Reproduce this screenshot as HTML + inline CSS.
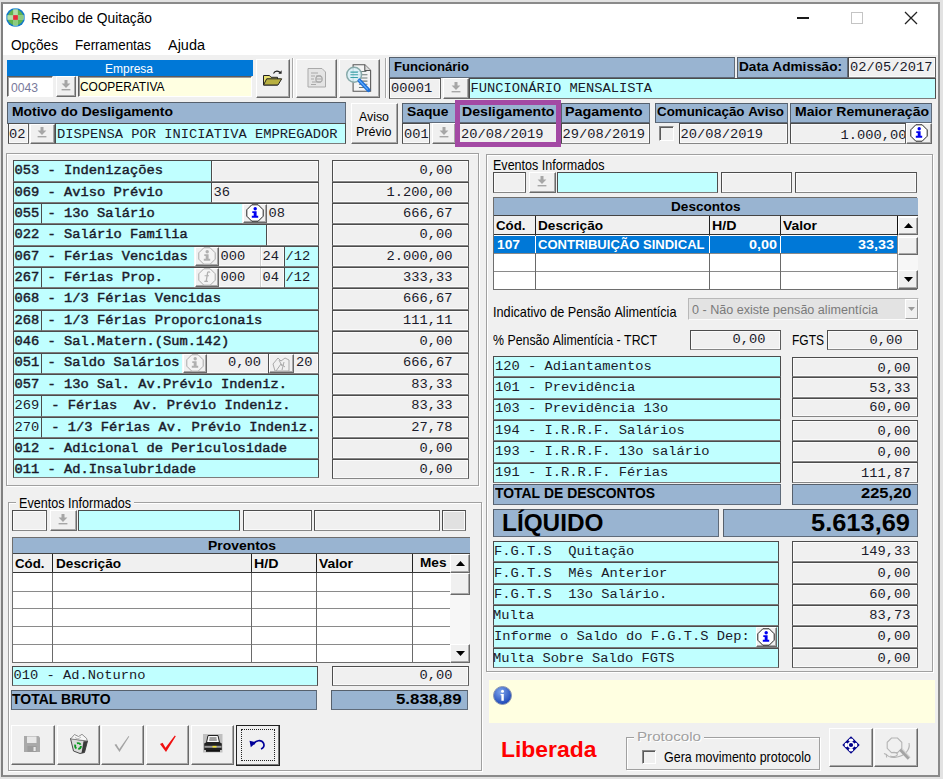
<!DOCTYPE html><html><head><meta charset="utf-8"><title>Recibo de Quitação</title><style>
html,body{margin:0;padding:0}
body{width:943px;height:779px;overflow:hidden;position:relative;background:#e2e2e2;font-family:"Liberation Sans",sans-serif;color:#000}
.a{position:absolute;box-sizing:border-box}
.t{position:absolute;white-space:nowrap;transform-origin:0 50%}
.s{font-family:"Liberation Sans",sans-serif}
.m{font-family:"Liberation Mono",monospace;color:#1a1a2a;transform:scaleY(.92);transform-origin:50% 78%}
.b{font-weight:bold}
.m.b{font-weight:normal;-webkit-text-stroke:.45px #1a1a2a}
.win{background:#f0f0f0;border:2px solid #8a8a8a;border-left-color:#808080 }
.hd{background:#99b4d1;border:1px solid #5f6b7a;border-top-color:#56606c;border-left-color:#56606c}
.cy{background:#c0ffff;border:1px solid #4c4c4c;border-bottom-color:#7c7c7c}
.fld{background:#f0f0f0;border:1px solid #4c4c4c;border-bottom-color:#868686;border-right-color:#5c5c5c;box-shadow:inset 0 0 0 1px #fafafa}
.sunk{background:#f0f0f0;border:1px solid;border-color:#5c5c5c #fff #fff #5c5c5c;box-shadow:inset 1px 1px 0 #9c9c9c}
.btn{background:#f0f0f0;border:1px solid;border-color:#fff #6a6a6a #6a6a6a #fff;box-shadow:inset -1px -1px 0 #a8a8a8}
.chk{background:#f0f0f0;border:1px solid;border-color:#8a8a8a #fff #fff #8a8a8a;box-shadow:inset 1px 1px 0 #5a5a5a}
.vsep{border-left:1px solid #a8a8a8;border-right:1px solid #fff}
.panel{border:1px solid #a0a0a0;box-shadow:inset 1px 1px 0 #fff,1px 1px 0 #fff}
.grp{border:1px solid #a0a0a0;box-shadow:inset 1px 1px 0 #fff,1px 1px 0 #fff}
.gridbox{background:#fff;border:1px solid #6e6e6e}
.colhd{background:#f0f0f0}
</style></head><body>
<div class="a win" style="left:1px;top:2px;width:939px;height:775px;"></div>
<div class="a " style="left:3px;top:4px;width:935px;height:51px;background:#fff"></div>
<svg class="a" style="left:6px;top:8.200px" width="19" height="19" viewBox="0 0 19 19"><defs><clipPath id="ic"><circle cx="9.500" cy="9.500" r="7.900"/></clipPath><clipPath id="oc"><circle cx="9.500" cy="9.500" r="9.500"/></clipPath></defs><circle cx="9.500" cy="9.500" r="9.500" fill="#1279c9"/><g clip-path="url(#oc)"><rect x="7.150" y="0" width="4.700" height="19" fill="#8cc4ea" opacity=".75"/><rect x="0" y="7.150" width="19" height="4.700" fill="#8cc4ea" opacity=".75"/></g><g clip-path="url(#ic)"><rect width="19" height="19" fill="#62b450"/><rect x="7.150" y="0" width="4.700" height="19" fill="#b4deac"/><rect x="0" y="7.150" width="19" height="4.700" fill="#b4deac"/><rect x="11.850" y="7.150" width="8" height="4.700" fill="#8ccb80"/><rect x="7.150" y="11.850" width="4.700" height="8" fill="#8ccb80"/></g><rect x="7.150" y="7.150" width="4.700" height="4.700" fill="#e8283a"/></svg>
<span id="t1" class="t s" style="font-size:15.1px;line-height:18.12px;top:9.14px;transform:scaleX(0.9127);left:31px;">Recibo&nbsp;de&nbsp;Quitação</span>
<span id="t2" class="t s" style="font-size:15.1px;line-height:18.12px;top:36.14px;transform:scaleX(0.9033);left:11px;">Opções</span>
<span id="t3" class="t s" style="font-size:15.1px;line-height:18.12px;top:36.14px;transform:scaleX(0.8882);left:75px;">Ferramentas</span>
<span id="t4" class="t s" style="font-size:15.1px;line-height:18.12px;top:36.14px;transform:scaleX(0.9583);left:168px;">Ajuda</span>
<div class="a " style="left:797px;top:17.3px;width:12px;height:1.5px;background:#1a1a1a"></div>
<div class="a " style="left:851px;top:12px;width:11.5px;height:11.5px;border:1px solid #c4c4c4"></div>
<svg class="a" style="left:904px;top:11px" width="14" height="14" viewBox="0 0 14 14"><path d="M1 1l12 12M13 1L1 13" stroke="#222" stroke-width="1.3" fill="none"/></svg>
<div class="a " style="left:7px;top:60px;width:246px;height:16px;background:#0078d7"></div>
<span id="t5" class="t s" style="font-size:13.7px;line-height:16.44px;top:60.78px;transform:scaleX(0.8762);color:#fff;left:104.5px;">Empresa</span>
<div class="a sunk" style="left:7px;top:76px;width:46px;height:21px;background:#fff"></div>
<span id="t6" class="t s" style="font-size:13.7px;line-height:16.44px;top:80.08px;transform:scaleX(0.8866);color:#7a7a9c;left:11px;">0043</span>
<div class="a btn" style="left:56px;top:76px;width:19.5px;height:21px;"></div>
<svg class="a" style="left:60.75px;top:79.9px" width="10" height="11" viewBox="0 0 10 11"><path d="M3.500 0h3v3.600h2.900L5 8 .6 3.600h2.900z" fill="#a6a6a6"/><rect x=".6" y="9" width="8.800" height="1.400" fill="#a6a6a6"/></svg>
<div class="a sunk" style="left:78px;top:76px;width:173.5px;height:21px;background:#ffffe1"></div>
<span id="t7" class="t s" style="font-size:13.7px;line-height:16.44px;top:79.28px;transform:scaleX(0.8725);left:79.5px;">COOPERATIVA</span>
<div class="a btn" style="left:256px;top:59px;width:33.5px;height:38.5px;"></div>
<div class="a vsep" style="left:291.5px;top:58px;width:2px;height:40px;"></div>
<div class="a btn" style="left:296px;top:59px;width:40.5px;height:38.5px;"></div>
<div class="a btn" style="left:338.5px;top:59px;width:41.5px;height:38.5px;"></div>
<div class="a vsep" style="left:384.5px;top:58px;width:2px;height:40px;"></div>
<svg class="a" style="left:262px;top:68px" width="22" height="20" viewBox="0 0 22 20"><path d="M1.5 7.5h6l1.5 1.8h6.5V17h-14z" fill="#e8e070" stroke="#222" stroke-width="1"/><path d="M1.5 17l3.2-6.2h15L16 17z" fill="#b8b040" stroke="#222" stroke-width="1"/><path d="M11.5 5.5c1.5-3 5-3.2 7-.6" fill="none" stroke="#222" stroke-width="1.1"/><path d="M19.6 2.3v3.4h-3.2z" fill="#222"/></svg>
<svg class="a" style="left:306px;top:67px" width="22" height="22" viewBox="0 0 22 22"><path d="M2 1.5h14l3.5 3.5V20H2z" fill="#e4e4e4" stroke="#aaa" stroke-width="1"/><g stroke="#a8a8a8" stroke-width="1.2" fill="none"><path d="M5 6h7M5 9h4M10 9h5M5 12h3M10 12h6M6 15h9M5 17.5h5"/><circle cx="13" cy="12" r="3.2"/></g></svg>
<svg class="a" style="left:344px;top:61.500px" width="32" height="34" viewBox="0 0 30 32"><path d="M8.5 2.5h11l5.5 5.5v19.5H8.5z" fill="#f4f4f4" stroke="#555" stroke-width="1"/><path d="M19.5 2.5V8H25" fill="#ddd" stroke="#555" stroke-width="1"/><g stroke="#6c7a78" stroke-width="1"><path d="M12 9h9M12 12h10M12 15h10M12 18h10M14 21h8M14 24h8"/></g><circle cx="9.5" cy="12" r="7" fill="#d8f0f8" fill-opacity=".85" stroke="#8aa" stroke-width="1.4"/><g stroke="#3aa0a8" stroke-width="1"><path d="M6 9.5h7M6 12h7M6 14.5h7"/></g><path d="M14.5 17.5l8.5 9" stroke="#1e6fd8" stroke-width="3.6" stroke-linecap="round"/><path d="M14 17l8 8.5" stroke="#5fb0ff" stroke-width="1.2" stroke-linecap="round"/></svg>
<div class="a hd" style="left:389px;top:57px;width:345.5px;height:20.5px;"></div>
<span id="t8" class="t s b" style="font-size:13.7px;line-height:16.44px;top:59.28px;transform:scaleX(0.9575);left:393.5px;">Funcionário</span>
<div class="a hd" style="left:737px;top:57px;width:110.5px;height:20.5px;"></div>
<span id="t9" class="t s b" style="font-size:13.7px;line-height:16.44px;top:59.28px;transform:scaleX(0.9956);left:739px;">Data&nbsp;Admissão:</span>
<div class="a fld" style="left:847.5px;top:57px;width:88px;height:20.5px;"></div>
<span id="t10" class="t m" style="font-size:13.75px;line-height:16.5px;top:59.75px;left:850px;">02/05/2017</span>
<div class="a fld" style="left:389px;top:78px;width:51.5px;height:20.5px;"></div>
<span id="t11" class="t m" style="font-size:13.75px;line-height:16.5px;top:81.05px;left:391px;">00001</span>
<div class="a btn" style="left:443px;top:78px;width:25.5px;height:20.5px;"></div>
<svg class="a" style="left:450.75px;top:81.65px" width="10" height="11" viewBox="0 0 10 11"><path d="M3.500 0h3v3.600h2.900L5 8 .6 3.600h2.900z" fill="#a6a6a6"/><rect x=".6" y="9" width="8.800" height="1.400" fill="#a6a6a6"/></svg>
<div class="a cy" style="left:468.5px;top:78px;width:467px;height:20.5px;"></div>
<span id="t12" class="t m" style="font-size:13.75px;line-height:16.5px;top:81.05px;left:470.5px;">FUNCIONÁRIO&nbsp;MENSALISTA</span>
<div class="a hd" style="left:7px;top:102px;width:338.5px;height:21.5px;"></div>
<span id="t13" class="t s b" style="font-size:13.7px;line-height:16.44px;top:103.78px;transform:scaleX(1.0178);left:12px;">Motivo&nbsp;do&nbsp;Desligamento</span>
<div class="a fld" style="left:7.5px;top:123px;width:21px;height:20.5px;"></div>
<span id="t14" class="t m" style="font-size:13.75px;line-height:16.5px;top:126.55px;left:9px;">02</span>
<div class="a btn" style="left:29.5px;top:123.5px;width:25px;height:20.5px;"></div>
<svg class="a" style="left:37px;top:127.15px" width="10" height="11" viewBox="0 0 10 11"><path d="M3.500 0h3v3.600h2.900L5 8 .6 3.600h2.900z" fill="#a6a6a6"/><rect x=".6" y="9" width="8.800" height="1.400" fill="#a6a6a6"/></svg>
<div class="a cy" style="left:55px;top:123px;width:290.5px;height:20.5px;"></div>
<span id="t15" class="t m" style="font-size:13.75px;line-height:16.5px;top:126.55px;left:57px;">DISPENSA&nbsp;POR&nbsp;INICIATIVA&nbsp;EMPREGADOR</span>
<div class="a btn" style="left:351px;top:103px;width:46.5px;height:40.5px;"></div>
<span id="t16" class="t s" style="font-size:13.7px;line-height:16.44px;top:108.98px;transform:scaleX(0.9027);left:358.5px;">Aviso</span>
<span id="t17" class="t s" style="font-size:13.7px;line-height:16.44px;top:123.98px;transform:scaleX(0.9150);left:355.5px;">Prévio</span>
<div class="a hd" style="left:402px;top:103px;width:53.5px;height:19.5px;"></div>
<span id="t18" class="t s b" style="font-size:13.7px;line-height:16.44px;top:103.78px;transform:scaleX(1.0103);left:407px;">Saque</span>
<div class="a fld" style="left:402px;top:123px;width:28px;height:20.5px;"></div>
<span id="t19" class="t m" style="font-size:13.75px;line-height:16.5px;top:126.55px;left:404px;">001</span>
<div class="a btn" style="left:432px;top:123px;width:23.5px;height:20.5px;"></div>
<svg class="a" style="left:438.75px;top:126.65px" width="10" height="11" viewBox="0 0 10 11"><path d="M3.500 0h3v3.600h2.900L5 8 .6 3.600h2.900z" fill="#a6a6a6"/><rect x=".6" y="9" width="8.800" height="1.400" fill="#a6a6a6"/></svg>
<div class="a hd" style="left:458px;top:103px;width:99.5px;height:19.5px;"></div>
<span id="t20" class="t s b" style="font-size:13.7px;line-height:16.44px;top:103.78px;transform:scaleX(1.0305);left:462px;">Desligamento</span>
<div class="a fld" style="left:458px;top:123px;width:99.5px;height:20.5px;"></div>
<span id="t21" class="t m" style="font-size:13.75px;line-height:16.5px;top:126.55px;left:461px;">20/08/2019</span>
<div class="a " style="left:455px;top:100px;width:106px;height:47px;border:5px solid #a349a4;"></div>
<div class="a hd" style="left:561px;top:103px;width:88.5px;height:19.5px;"></div>
<span id="t22" class="t s b" style="font-size:13.7px;line-height:16.44px;top:103.78px;transform:scaleX(1.0504);left:564.5px;">Pagamento</span>
<div class="a fld" style="left:561px;top:123px;width:88.5px;height:20.5px;"></div>
<span id="t23" class="t m" style="font-size:13.75px;line-height:16.5px;top:126.55px;left:562.5px;">29/08/2019</span>
<div class="a hd" style="left:655px;top:103px;width:132.5px;height:19.5px;"></div>
<span id="t24" class="t s b" style="font-size:13.7px;line-height:16.44px;top:103.78px;transform:scaleX(0.9745);left:657px;">Comunicação&nbsp;Aviso</span>
<div class="a chk" style="left:659px;top:126px;width:14.5px;height:14.5px;"></div>
<div class="a fld" style="left:679px;top:123px;width:108.5px;height:20.5px;"></div>
<span id="t25" class="t m" style="font-size:13.75px;line-height:16.5px;top:126.55px;left:680.5px;">20/08/2019</span>
<div class="a hd" style="left:790px;top:103px;width:141.5px;height:19.5px;"></div>
<span id="t26" class="t s b" style="font-size:13.7px;line-height:16.44px;top:103.78px;transform:scaleX(1.0241);left:795px;">Maior&nbsp;Remuneração</span>
<div class="a fld" style="left:790px;top:123px;width:116px;height:20.5px;overflow:hidden"><span class="t m" style="font-size:13.75px;line-height:20px;top:1.5px;right:-1.5px">1.000,00</span></div>
<div class="a btn" style="left:906px;top:123px;width:25.5px;height:20.5px;"></div>
<svg class="a" style="left:909.75px;top:123.95px" width="18" height="18" viewBox="0 0 18 18"><path d="M5.800 .8h6.400l5 5v6.400l-5 5H5.800l-5-5V5.800z" fill="#fff" stroke="#222" stroke-width="1"/><circle cx="9.200" cy="4.700" r="1.700" fill="#0000f0"/><path d="M6.300 7.300h4.300v4.500h1.600v2H5.800v-2h1.900V9H6.300z" fill="#0000f0"/></svg>
<div class="a panel" style="left:6px;top:153px;width:473px;height:333px;"></div>
<div class="a cy" style="left:13px;top:160px;width:199px;height:22px;"></div>
<span id="t27" class="t m b" style="font-size:13.75px;line-height:16.5px;top:163.23px;left:14.6px;">053&nbsp;-&nbsp;Indenizações</span>
<div class="a fld" style="left:211px;top:160px;width:107.5px;height:22px;"></div>
<div class="a fld" style="left:332px;top:160px;width:136.5px;height:22px;"></div>
<span id="t28" class="t m" style="font-size:13.75px;line-height:16.5px;top:163.23px;right:490.5px;">0,00</span>
<div class="a cy" style="left:13px;top:182px;width:199px;height:21px;"></div>
<span id="t29" class="t m b" style="font-size:13.75px;line-height:16.5px;top:184.59px;left:14.6px;">069&nbsp;-&nbsp;Aviso&nbsp;Prévio</span>
<div class="a fld" style="left:211px;top:182px;width:107.5px;height:21px;"></div>
<span id="t30" class="t m" style="font-size:13.75px;line-height:16.5px;top:184.59px;left:213.5px;">36</span>
<div class="a fld" style="left:332px;top:182px;width:136.5px;height:21px;"></div>
<span id="t31" class="t m" style="font-size:13.75px;line-height:16.5px;top:184.59px;right:490.5px;">1.200,00</span>
<div class="a cy" style="left:13px;top:203px;width:29px;height:21px;"></div>
<div class="a cy" style="left:41px;top:203px;width:202px;height:21px;"></div>
<span id="t32" class="t m b" style="font-size:13.75px;line-height:16.5px;top:205.94px;left:14.6px;">055</span>
<span id="t33" class="t m b" style="font-size:13.75px;line-height:16.5px;top:205.94px;left:47.6px;">-&nbsp;13o&nbsp;Salário</span>
<div class="a fld" style="left:242px;top:203px;width:76.5px;height:21px;border-left:0"></div>
<div class="a btn" style="left:243px;top:204px;width:23.5px;height:19px;"></div>
<svg class="a" style="left:245.75px;top:204.2px" width="18" height="18" viewBox="0 0 18 18"><path d="M5.800 .8h6.400l5 5v6.400l-5 5H5.800l-5-5V5.800z" fill="#fff" stroke="#222" stroke-width="1"/><circle cx="9.200" cy="4.700" r="1.700" fill="#0000f0"/><path d="M6.300 7.300h4.300v4.500h1.600v2H5.800v-2h1.900V9H6.300z" fill="#0000f0"/></svg>
<span id="t34" class="t m" style="font-size:13.75px;line-height:16.5px;top:205.94px;left:268.5px;">08</span>
<div class="a fld" style="left:332px;top:203px;width:136.5px;height:21px;"></div>
<span id="t35" class="t m" style="font-size:13.75px;line-height:16.5px;top:205.94px;right:490.5px;">666,67</span>
<div class="a cy" style="left:13px;top:224px;width:254px;height:22px;"></div>
<span id="t36" class="t m b" style="font-size:13.75px;line-height:16.5px;top:227.3px;left:14.6px;">022&nbsp;-&nbsp;Salário&nbsp;Família</span>
<div class="a fld" style="left:266px;top:224px;width:52.5px;height:22px;"></div>
<div class="a fld" style="left:332px;top:224px;width:136.5px;height:22px;"></div>
<span id="t37" class="t m" style="font-size:13.75px;line-height:16.5px;top:227.3px;right:490.5px;">0,00</span>
<div class="a cy" style="left:13px;top:246px;width:182px;height:21px;"></div>
<span id="t38" class="t m b" style="font-size:13.75px;line-height:16.5px;top:248.66px;left:14.6px;">067&nbsp;-&nbsp;Férias&nbsp;Vencidas</span>
<div class="a fld" style="left:194px;top:246px;width:91px;height:21px;border-left:0"></div>
<div class="a btn" style="left:195px;top:247px;width:23.5px;height:19px;"></div>
<svg class="a" style="left:197.75px;top:247.2px" width="18" height="18" viewBox="0 0 18 18"><path d="M5.800 .8h6.400l5 5v6.400l-5 5H5.800l-5-5V5.800z" fill="#f4f4f4" stroke="#aaa" stroke-width="1"/><circle cx="9.200" cy="4.700" r="1.700" fill="#b0b0b0"/><path d="M6.300 7.300h4.300v4.500h1.600v2H5.800v-2h1.900V9H6.300z" fill="#b0b0b0"/></svg>
<span id="t39" class="t m" style="font-size:13.75px;line-height:16.5px;top:248.66px;left:220.5px;">000</span>
<div class="a " style="left:259.7px;top:247px;width:2px;height:19px;background:#fdfdfd;border-left:1px solid #cfcfcf"></div>
<span id="t40" class="t m" style="font-size:13.75px;line-height:16.5px;top:248.66px;left:262.5px;">24</span>
<div class="a cy" style="left:284px;top:246px;width:34.5px;height:21px;"></div>
<span id="t41" class="t m" style="font-size:13.75px;line-height:16.5px;top:248.66px;left:285.5px;">/12</span>
<div class="a fld" style="left:332px;top:246px;width:136.5px;height:21px;"></div>
<span id="t42" class="t m" style="font-size:13.75px;line-height:16.5px;top:248.66px;right:490.5px;">2.000,00</span>
<div class="a cy" style="left:13px;top:267px;width:29px;height:21px;"></div>
<div class="a cy" style="left:41px;top:267px;width:154px;height:21px;"></div>
<span id="t43" class="t m b" style="font-size:13.75px;line-height:16.5px;top:270.01px;left:14.6px;">267</span>
<span id="t44" class="t m b" style="font-size:13.75px;line-height:16.5px;top:270.01px;left:47.6px;">-&nbsp;Férias&nbsp;Prop.</span>
<div class="a fld" style="left:194px;top:267px;width:91px;height:21px;border-left:0"></div>
<div class="a btn" style="left:195px;top:268px;width:23.5px;height:19px;"></div>
<svg class="a" style="left:197.75px;top:268.2px" width="18" height="18" viewBox="0 0 18 18"><path d="M5.800 .8h6.400l5 5v6.400l-5 5H5.800l-5-5V5.800z" fill="#f4f4f4" stroke="#aaa" stroke-width="1"/><path d="M11.800 4.600c-.3-1-1.700-1.100-2.200 0L8.200 13.300" fill="none" stroke="#b0b0b0" stroke-width="1.300"/><path d="M6.600 7.800h4.400M6.300 13.400h3.600" stroke="#b0b0b0" stroke-width="1.100"/></svg>
<span id="t45" class="t m" style="font-size:13.75px;line-height:16.5px;top:270.01px;left:220.5px;">000</span>
<div class="a " style="left:259.7px;top:268px;width:2px;height:19px;background:#fdfdfd;border-left:1px solid #cfcfcf"></div>
<span id="t46" class="t m" style="font-size:13.75px;line-height:16.5px;top:270.01px;left:262.5px;">04</span>
<div class="a cy" style="left:284px;top:267px;width:34.5px;height:21px;"></div>
<span id="t47" class="t m" style="font-size:13.75px;line-height:16.5px;top:270.01px;left:285.5px;">/12</span>
<div class="a fld" style="left:332px;top:267px;width:136.5px;height:21px;"></div>
<span id="t48" class="t m" style="font-size:13.75px;line-height:16.5px;top:270.01px;right:490.5px;">333,33</span>
<div class="a cy" style="left:13px;top:288px;width:305.5px;height:22px;"></div>
<span id="t49" class="t m b" style="font-size:13.75px;line-height:16.5px;top:291.37px;left:14.6px;">068&nbsp;-&nbsp;1/3&nbsp;Férias&nbsp;Vencidas</span>
<div class="a fld" style="left:332px;top:288px;width:136.5px;height:22px;"></div>
<span id="t50" class="t m" style="font-size:13.75px;line-height:16.5px;top:291.37px;right:490.5px;">666,67</span>
<div class="a cy" style="left:13px;top:310px;width:29px;height:21px;"></div>
<div class="a cy" style="left:41px;top:310px;width:277.5px;height:21px;"></div>
<span id="t51" class="t m b" style="font-size:13.75px;line-height:16.5px;top:312.73px;left:14.6px;">268</span>
<span id="t52" class="t m b" style="font-size:13.75px;line-height:16.5px;top:312.73px;left:47.6px;">-&nbsp;1/3&nbsp;Férias&nbsp;Proporcionais</span>
<div class="a fld" style="left:332px;top:310px;width:136.5px;height:21px;"></div>
<span id="t53" class="t m" style="font-size:13.75px;line-height:16.5px;top:312.73px;right:490.5px;">111,11</span>
<div class="a cy" style="left:13px;top:331px;width:305.5px;height:22px;"></div>
<span id="t54" class="t m b" style="font-size:13.75px;line-height:16.5px;top:334.08px;left:14.6px;">046&nbsp;-&nbsp;Sal.Matern.(Sum.142)</span>
<div class="a fld" style="left:332px;top:331px;width:136.5px;height:22px;"></div>
<span id="t55" class="t m" style="font-size:13.75px;line-height:16.5px;top:334.08px;right:490.5px;">0,00</span>
<div class="a cy" style="left:13px;top:353px;width:29px;height:21px;"></div>
<div class="a cy" style="left:41px;top:353px;width:142px;height:21px;"></div>
<span id="t56" class="t m b" style="font-size:13.75px;line-height:16.5px;top:355.44px;left:14.6px;">051</span>
<span id="t57" class="t m b" style="font-size:13.75px;line-height:16.5px;top:355.44px;left:47.6px;">-&nbsp;Saldo&nbsp;Salários</span>
<div class="a fld" style="left:182px;top:353px;width:87px;height:21px;border-left:0;border-right:0"></div>
<div class="a btn" style="left:183px;top:354px;width:23.5px;height:19px;"></div>
<svg class="a" style="left:185.75px;top:354.2px" width="18" height="18" viewBox="0 0 18 18"><path d="M5.800 .8h6.400l5 5v6.400l-5 5H5.800l-5-5V5.800z" fill="#f4f4f4" stroke="#aaa" stroke-width="1"/><circle cx="9.200" cy="4.700" r="1.700" fill="#b0b0b0"/><path d="M6.300 7.300h4.300v4.500h1.600v2H5.800v-2h1.900V9H6.300z" fill="#b0b0b0"/></svg>
<span id="t58" class="t m" style="font-size:13.75px;line-height:16.5px;top:355.44px;right:682px;">0,00</span>
<div class="a fld" style="left:268px;top:353px;width:50.5px;height:21px;"></div>
<div class="a btn" style="left:269px;top:354px;width:25px;height:19px;"></div>
<svg class="a" style="left:272px;top:356px" width="19" height="17" viewBox="0 0 19 17"><g fill="none" stroke="#aaa" stroke-width="1"><path d="M1 8l5-6 3 3 4-3 4 2v11H3z"/><path d="M4 15l5-7 4 3M7 4l3 6M12 6l-2 8"/></g></svg>
<span id="t59" class="t m" style="font-size:13.75px;line-height:16.5px;top:355.44px;left:296px;">20</span>
<div class="a fld" style="left:332px;top:353px;width:136.5px;height:21px;"></div>
<span id="t60" class="t m" style="font-size:13.75px;line-height:16.5px;top:355.44px;right:490.5px;">666,67</span>
<div class="a cy" style="left:13px;top:374px;width:305.5px;height:21px;"></div>
<span id="t61" class="t m b" style="font-size:13.75px;line-height:16.5px;top:376.8px;left:14.6px;">057&nbsp;-&nbsp;13o&nbsp;Sal.&nbsp;Av.Prévio&nbsp;Indeniz.</span>
<div class="a fld" style="left:332px;top:374px;width:136.5px;height:21px;"></div>
<span id="t62" class="t m" style="font-size:13.75px;line-height:16.5px;top:376.8px;right:490.5px;">83,33</span>
<div class="a cy" style="left:13px;top:395px;width:29px;height:22px;"></div>
<div class="a cy" style="left:41px;top:395px;width:277.5px;height:22px;"></div>
<span id="t63" class="t m" style="font-size:13.75px;line-height:16.5px;top:398.16px;left:14.6px;">269</span>
<span id="t64" class="t m b" style="font-size:13.75px;line-height:16.5px;top:398.16px;left:42.9px;">&nbsp;-&nbsp;Férias&nbsp;&nbsp;Av.&nbsp;Prévio&nbsp;Indeniz.</span>
<div class="a fld" style="left:332px;top:395px;width:136.5px;height:22px;"></div>
<span id="t65" class="t m" style="font-size:13.75px;line-height:16.5px;top:398.16px;right:490.5px;">83,33</span>
<div class="a cy" style="left:13px;top:417px;width:29px;height:21px;"></div>
<div class="a cy" style="left:41px;top:417px;width:277.5px;height:21px;"></div>
<span id="t66" class="t m" style="font-size:13.75px;line-height:16.5px;top:419.51px;left:14.6px;">270</span>
<span id="t67" class="t m b" style="font-size:13.75px;line-height:16.5px;top:419.51px;left:42.9px;">&nbsp;-&nbsp;1/3&nbsp;Férias&nbsp;Av.&nbsp;Prévio&nbsp;Indeniz.</span>
<div class="a fld" style="left:332px;top:417px;width:136.5px;height:21px;"></div>
<span id="t68" class="t m" style="font-size:13.75px;line-height:16.5px;top:419.51px;right:490.5px;">27,78</span>
<div class="a cy" style="left:13px;top:438px;width:305.5px;height:21px;"></div>
<span id="t69" class="t m b" style="font-size:13.75px;line-height:16.5px;top:440.87px;left:14.6px;">012&nbsp;-&nbsp;Adicional&nbsp;de&nbsp;Periculosidade</span>
<div class="a fld" style="left:332px;top:438px;width:136.5px;height:21px;"></div>
<span id="t70" class="t m" style="font-size:13.75px;line-height:16.5px;top:440.87px;right:490.5px;">0,00</span>
<div class="a cy" style="left:13px;top:459px;width:305.5px;height:19px;"></div>
<span id="t71" class="t m b" style="font-size:13.75px;line-height:16.5px;top:462.23px;left:14.6px;">011&nbsp;-&nbsp;Ad.Insalubridade</span>
<div class="a fld" style="left:332px;top:459px;width:136.5px;height:20px;"></div>
<span id="t72" class="t m" style="font-size:13.75px;line-height:16.5px;top:462.23px;right:490.5px;">0,00</span>
<div class="a grp" style="left:8px;top:502px;width:474px;height:269px;"></div>
<div class="a " style="left:16px;top:495px;width:118px;height:14px;background:#f0f0f0"></div>
<span id="t73" class="t s" style="font-size:15px;line-height:18px;top:493.7px;transform:scaleX(0.8395);left:19px;">Eventos&nbsp;Informados</span>
<div class="a fld" style="left:12px;top:510px;width:34.5px;height:21px;"></div>
<div class="a btn" style="left:50px;top:510px;width:26.5px;height:21px;"></div>
<svg class="a" style="left:58.25px;top:513.9px" width="10" height="11" viewBox="0 0 10 11"><path d="M3.500 0h3v3.600h2.900L5 8 .6 3.600h2.900z" fill="#a6a6a6"/><rect x=".6" y="9" width="8.800" height="1.400" fill="#a6a6a6"/></svg>
<div class="a cy" style="left:78px;top:510px;width:161.5px;height:21px;"></div>
<div class="a fld" style="left:243px;top:510px;width:68.5px;height:21px;"></div>
<div class="a fld" style="left:314px;top:510px;width:125.5px;height:21px;"></div>
<div class="a fld" style="left:442px;top:510px;width:23.5px;height:21px;background:#e1e1e1"></div>
<div class="a gridbox" style="left:12px;top:537px;width:458px;height:126px;border-right:0"></div>
<div class="a " style="left:13px;top:538px;width:457px;height:16px;background:#99b4d1;border-bottom:1px solid #444"></div>
<span id="t74" class="t s b" style="font-size:13.7px;line-height:16.44px;top:537.58px;transform:scaleX(1.0159);left:207.5px;">Proventos</span>
<div class="a colhd" style="left:13px;top:554px;width:437px;height:18.5px;"></div>
<div class="a " style="left:13px;top:590.5px;width:437px;height:1px;background:#8a8a8a"></div>
<div class="a " style="left:13px;top:608.3px;width:437px;height:1px;background:#8a8a8a"></div>
<div class="a " style="left:13px;top:626px;width:437px;height:1px;background:#8a8a8a"></div>
<div class="a " style="left:13px;top:644px;width:437px;height:1px;background:#8a8a8a"></div>
<div class="a " style="left:52px;top:554px;width:1px;height:108px;background:#6a6a6a"></div>
<div class="a " style="left:52px;top:554px;width:1.3px;height:18.5px;background:#222"></div>
<div class="a " style="left:250.5px;top:554px;width:1px;height:108px;background:#6a6a6a"></div>
<div class="a " style="left:250.5px;top:554px;width:1.3px;height:18.5px;background:#222"></div>
<div class="a " style="left:315.5px;top:554px;width:1px;height:108px;background:#6a6a6a"></div>
<div class="a " style="left:315.5px;top:554px;width:1.3px;height:18.5px;background:#222"></div>
<div class="a " style="left:411.5px;top:554px;width:1px;height:108px;background:#6a6a6a"></div>
<div class="a " style="left:411.5px;top:554px;width:1.3px;height:18.5px;background:#222"></div>
<div class="a " style="left:13px;top:571.5px;width:437px;height:1.5px;background:#333"></div>
<span id="t75" class="t s b" style="font-size:13.7px;line-height:16.44px;top:556.38px;transform:scaleX(0.9697);left:14.5px;">Cód.</span>
<span id="t76" class="t s b" style="font-size:13.7px;line-height:16.44px;top:556.38px;transform:scaleX(0.9933);left:55.5px;">Descrição</span>
<span id="t77" class="t s b" style="font-size:13.7px;line-height:16.44px;top:556.38px;transform:scaleX(1.0391);left:253.5px;">H/D</span>
<span id="t78" class="t s b" style="font-size:13.7px;line-height:16.44px;top:556.38px;transform:scaleX(1.0154);left:318.5px;">Valor</span>
<span id="t79" class="t s b" style="font-size:12.6px;line-height:15.12px;top:556.44px;transform:scaleX(1.0816);left:419.5px;">Mes</span>
<div class="a " style="left:450px;top:554px;width:20px;height:108.5px;background:#f7f7f7"></div>
<div class="a btn" style="left:450px;top:554px;width:20px;height:18.5px;"></div>
<div class="a btn" style="left:450px;top:573px;width:20px;height:21.5px;"></div>
<div class="a btn" style="left:450px;top:644px;width:20px;height:18.5px;"></div>
<svg class="a" style="left:455.5px;top:560.75px" width="9" height="5" viewBox="0 0 9 5"><path d="M0 5l4.5-5 4.5 5z" fill="#000"/></svg>
<svg class="a" style="left:455.5px;top:650.75px" width="9" height="5" viewBox="0 0 9 5"><path d="M0 0h9l-4.5 5z" fill="#000"/></svg>
<div class="a cy" style="left:12px;top:665.5px;width:305.5px;height:20.5px;"></div>
<span id="t80" class="t m" style="font-size:13.75px;line-height:16.5px;top:667.75px;left:13.5px;">010&nbsp;-&nbsp;Ad.Noturno</span>
<div class="a fld" style="left:332px;top:665.5px;width:136.5px;height:20.5px;"></div>
<span id="t81" class="t m" style="font-size:13.75px;line-height:16.5px;top:667.75px;right:490.5px;">0,00</span>
<div class="a hd" style="left:11px;top:689.5px;width:305.5px;height:20px;"></div>
<span id="t82" class="t s b" style="font-size:14.6px;line-height:17.52px;top:690.74px;transform:scaleX(0.9566);left:12px;">TOTAL&nbsp;BRUTO</span>
<div class="a hd" style="left:331px;top:689.5px;width:136.5px;height:20px;"></div>
<span id="t83" class="t s b" style="font-size:14.6px;line-height:17.52px;top:690.74px;transform:scaleX(1.1529);left:395.5px;">5.838,89</span>
<div class="a btn" style="left:11px;top:725px;width:43.5px;height:40px;"></div>
<div class="a btn" style="left:57px;top:725px;width:42.5px;height:40px;"></div>
<div class="a btn" style="left:101px;top:725px;width:42.5px;height:40px;"></div>
<div class="a btn" style="left:146px;top:725px;width:42.5px;height:40px;"></div>
<div class="a btn" style="left:191px;top:725px;width:42.5px;height:40px;"></div>
<div class="a " style="left:236px;top:725px;width:43.5px;height:40.5px;background:#f0f0f0;border:1.5px solid #222;box-shadow:inset -1px -1px 0 #777"></div>
<div class="a " style="left:240.5px;top:729px;width:34.5px;height:32px;border:1px dotted #222"></div>
<svg class="a" style="left:23px;top:735px" width="18" height="18" viewBox="0 0 18 18"><path d="M1 1h14.5L17 2.5V17H1z" fill="#a9a9a9"/><rect x="4" y="1.5" width="9.5" height="6.5" fill="#e8e8e8"/><rect x="4.5" y="11" width="9" height="6" fill="#9c9c9c"/><rect x="10.5" y="12" width="2.2" height="4" fill="#e8e8e8"/></svg>
<svg class="a" style="left:68px;top:733px" width="22" height="22" viewBox="0 0 22 22"><path d="M2.500 5.500L19.500 8l-3 11.500-4.500 1L5.500 18z" fill="#dadada" stroke="#4a4a4a" stroke-width="1"/><path d="M15.500 8.300l4-.3-3 11.500-3 .8z" fill="#3a3a3a"/><path d="M3 5.500l3.500-4 4 2 3.500-2.200 4.500 4 .8 2.700-16-2z" fill="#f6f6f6" stroke="#777" stroke-width=".8"/><path d="M7 4.500l3 1.500 3-2M10 6v1.500" fill="none" stroke="#aaa" stroke-width=".8"/><circle cx="10" cy="13" r="2.900" fill="none" stroke="#0a9a20" stroke-width="1.900" stroke-dasharray="4.200 1.900"/></svg>
<svg class="a" style="left:112px;top:735px" width="20" height="18" viewBox="0 0 20 18"><path d="M2.500 9.800l1.800-.8 3 5L16.500 1l.8.500L7.500 17z" fill="#a4a4a4"/></svg>
<svg class="a" style="left:157px;top:734px" width="22" height="20" viewBox="0 0 22 20"><path d="M3 10l2.600-1.200 2.900 5L17.800 1.500l1 .7L9 18z" fill="#f01010"/></svg>
<svg class="a" style="left:202.500px;top:734px" width="20" height="19" viewBox="0 0 20 19"><rect width="19.500" height="18.500" fill="#c0c0c0"/><path d="M5 1.500h10l1.500 7h-13z" fill="#fafafa" stroke="#222" stroke-width="1"/><path d="M6.500 4h7M6.200 6h7.600" stroke="#333" stroke-width=".9"/><path d="M1.200 9.500l2.500-1.500h12.600l2.500 1.500v6.500H1.200z" fill="#222"/><rect x="1.500" y="11.800" width="17" height="2" fill="#9a9a9a"/><rect x="9.500" y="11.900" width="4" height="1.600" fill="#f4e430"/><rect x="3" y="16" width="14" height="1.800" fill="#111"/></svg>
<svg class="a" style="left:249px;top:738.500px" width="17" height="11" viewBox="0 0 17 11"><path d="M4.500 5.500C6 1.200 12.500 .3 14.500 4.200c1.300 2.800-.3 5-2.500 5.800" fill="none" stroke="#00009a" stroke-width="1.700"/><path d="M.5 1.800l6.700 1.400-5.400 5z" fill="#00009a"/></svg>
<div class="a panel" style="left:486px;top:154px;width:447px;height:518px;"></div>
<span id="t84" class="t s" style="font-size:15px;line-height:18px;top:156px;transform:scaleX(0.8358);left:493px;">Eventos&nbsp;Informados</span>
<div class="a fld" style="left:493px;top:172px;width:32.5px;height:20.5px;"></div>
<div class="a btn" style="left:529px;top:172px;width:26.5px;height:20.5px;"></div>
<svg class="a" style="left:537.25px;top:175.65px" width="10" height="11" viewBox="0 0 10 11"><path d="M3.500 0h3v3.600h2.900L5 8 .6 3.600h2.900z" fill="#a6a6a6"/><rect x=".6" y="9" width="8.800" height="1.400" fill="#a6a6a6"/></svg>
<div class="a cy" style="left:557px;top:172px;width:160.5px;height:20.5px;"></div>
<div class="a fld" style="left:721px;top:172px;width:70.5px;height:20.5px;"></div>
<div class="a fld" style="left:795px;top:172px;width:121.5px;height:20.5px;"></div>
<div class="a gridbox" style="left:493px;top:197px;width:424px;height:92.5px;border-right:0"></div>
<div class="a " style="left:494px;top:198px;width:424px;height:18px;background:#99b4d1;border-bottom:1px solid #444"></div>
<span id="t85" class="t s b" style="font-size:13.7px;line-height:16.44px;top:198.58px;transform:scaleX(0.9931);left:670.5px;">Descontos</span>
<div class="a colhd" style="left:494px;top:216px;width:403px;height:18.5px;"></div>
<div class="a " style="left:494px;top:236px;width:403px;height:16.5px;background:#0078d7"></div>
<div class="a " style="left:494px;top:253px;width:403px;height:1px;background:#8a8a8a"></div>
<div class="a " style="left:494px;top:270.5px;width:403px;height:1px;background:#8a8a8a"></div>
<div class="a " style="left:534.5px;top:216px;width:1px;height:72.5px;background:#6a6a6a"></div>
<div class="a " style="left:534.5px;top:216px;width:1.3px;height:18.5px;background:#222"></div>
<div class="a " style="left:534.5px;top:236px;width:1px;height:16.5px;background:#fff"></div>
<div class="a " style="left:709px;top:216px;width:1px;height:72.5px;background:#6a6a6a"></div>
<div class="a " style="left:709px;top:216px;width:1.3px;height:18.5px;background:#222"></div>
<div class="a " style="left:709px;top:236px;width:1px;height:16.5px;background:#fff"></div>
<div class="a " style="left:780px;top:216px;width:1px;height:72.5px;background:#6a6a6a"></div>
<div class="a " style="left:780px;top:216px;width:1.3px;height:18.5px;background:#222"></div>
<div class="a " style="left:780px;top:236px;width:1px;height:16.5px;background:#fff"></div>
<div class="a " style="left:494px;top:233.5px;width:403px;height:1.5px;background:#333"></div>
<span id="t86" class="t s b" style="font-size:13.7px;line-height:16.44px;top:218.48px;transform:scaleX(0.9697);left:496.2px;">Cód.</span>
<span id="t87" class="t s b" style="font-size:13.7px;line-height:16.44px;top:218.48px;transform:scaleX(0.9933);left:537.5px;">Descrição</span>
<span id="t88" class="t s b" style="font-size:13.7px;line-height:16.44px;top:218.48px;transform:scaleX(1.0391);left:712px;">H/D</span>
<span id="t89" class="t s b" style="font-size:13.7px;line-height:16.44px;top:218.48px;transform:scaleX(1.0154);left:783px;">Valor</span>
<span id="t90" class="t s b" style="font-size:13.7px;line-height:16.44px;top:237.08px;transform:scaleX(1.0068);color:#fff;left:497px;">107</span>
<span id="t91" class="t s b" style="font-size:13.7px;line-height:16.44px;top:237.08px;transform:scaleX(0.9520);color:#fff;left:538px;">CONTRIBUIÇÃO&nbsp;SINDICAL</span>
<span id="t92" class="t s b" style="font-size:13.7px;line-height:16.44px;top:237.08px;transform:scaleX(1.0510);color:#fff;left:749px;">0,00</span>
<span id="t93" class="t s b" style="font-size:13.7px;line-height:16.44px;top:237.08px;transform:scaleX(1.0506);color:#fff;left:858px;">33,33</span>
<div class="a " style="left:897px;top:216px;width:1px;height:19px;background:#111"></div>
<div class="a " style="left:897px;top:235px;width:1px;height:54px;background:#8a8a8a"></div>
<div class="a " style="left:898px;top:216.5px;width:20px;height:72.5px;background:#f7f7f7"></div>
<div class="a btn" style="left:898px;top:216.5px;width:20px;height:18.5px;"></div>
<div class="a btn" style="left:898px;top:237px;width:20px;height:18px;"></div>
<div class="a btn" style="left:898px;top:270px;width:20px;height:19px;"></div>
<svg class="a" style="left:903.5px;top:223.25px" width="9" height="5" viewBox="0 0 9 5"><path d="M0 5l4.5-5 4.5 5z" fill="#000"/></svg>
<svg class="a" style="left:903.5px;top:277px" width="9" height="5" viewBox="0 0 9 5"><path d="M0 0h9l-4.5 5z" fill="#000"/></svg>
<span id="t94" class="t s" style="font-size:15px;line-height:18px;top:302.5px;transform:scaleX(0.8464);left:493px;">Indicativo&nbsp;de&nbsp;Pensão&nbsp;Alimentícia</span>
<div class="a " style="left:688px;top:297.5px;width:230.5px;height:22px;background:#e3e3e3;border:1px solid;border-color:#b8b8b8 #fbfbfb #fbfbfb #b8b8b8"></div>
<span id="t95" class="t s" style="font-size:13.7px;line-height:16.44px;top:301.78px;transform:scaleX(0.9190);color:#7a7a7a;left:692px;">0&nbsp;-&nbsp;Não&nbsp;existe&nbsp;pensão&nbsp;alimentícia</span>
<div class="a btn" style="left:904.5px;top:299px;width:13px;height:19.5px;border-color:#fff #9a9a9a #9a9a9a #fff;box-shadow:none"></div>
<svg class="a" style="left:907.500px;top:307px" width="7" height="4" viewBox="0 0 7 4"><path d="M0 0h7l-3.500 4z" fill="#9a9a9a"/></svg>
<span id="t96" class="t s" style="font-size:15px;line-height:18px;top:331px;transform:scaleX(0.8232);left:493px;">%&nbsp;Pensão&nbsp;Alimentícia&nbsp;-&nbsp;TRCT</span>
<div class="a fld" style="left:690px;top:330px;width:90.5px;height:19.5px;"></div>
<span id="t97" class="t m" style="font-size:13.75px;line-height:16.5px;top:332.45px;right:177.5px;">0,00</span>
<span id="t98" class="t s" style="font-size:15px;line-height:18px;top:331px;transform:scaleX(0.8000);left:792px;">FGTS</span>
<div class="a fld" style="left:827px;top:330px;width:90.5px;height:19.5px;"></div>
<span id="t99" class="t m" style="font-size:13.75px;line-height:16.5px;top:332.95px;right:40.5px;">0,00</span>
<div class="a cy" style="left:493px;top:356px;width:287.5px;height:21px;"></div>
<span id="t100" class="t m" style="font-size:13.75px;line-height:16.5px;top:358.53px;left:495px;">120&nbsp;-&nbsp;Adiantamentos</span>
<div class="a fld" style="left:792px;top:357px;width:126px;height:20px;"></div>
<span id="t101" class="t m" style="font-size:13.75px;line-height:16.5px;top:360.95px;right:32.5px;">0,00</span>
<div class="a cy" style="left:493px;top:377px;width:287.5px;height:22px;"></div>
<span id="t102" class="t m" style="font-size:13.75px;line-height:16.5px;top:379.89px;left:495px;">101&nbsp;-&nbsp;Previdência</span>
<div class="a fld" style="left:792px;top:377px;width:126px;height:21px;"></div>
<span id="t103" class="t m" style="font-size:13.75px;line-height:16.5px;top:380.95px;right:32.5px;">53,33</span>
<div class="a cy" style="left:493px;top:399px;width:287.5px;height:21px;"></div>
<span id="t104" class="t m" style="font-size:13.75px;line-height:16.5px;top:401.24px;left:495px;">103&nbsp;-&nbsp;Previdência&nbsp;13o</span>
<div class="a fld" style="left:792px;top:398px;width:126px;height:19px;"></div>
<span id="t105" class="t m" style="font-size:13.75px;line-height:16.5px;top:400.05px;right:32.5px;">60,00</span>
<div class="a cy" style="left:493px;top:420px;width:287.5px;height:21px;"></div>
<span id="t106" class="t m" style="font-size:13.75px;line-height:16.5px;top:422.6px;left:495px;">194&nbsp;-&nbsp;I.R.R.F.&nbsp;Salários</span>
<div class="a fld" style="left:792px;top:420px;width:126px;height:21px;"></div>
<span id="t107" class="t m" style="font-size:13.75px;line-height:16.5px;top:423.55px;right:32.5px;">0,00</span>
<div class="a cy" style="left:493px;top:441px;width:287.5px;height:22px;"></div>
<span id="t108" class="t m" style="font-size:13.75px;line-height:16.5px;top:443.96px;left:495px;">193&nbsp;-&nbsp;I.R.R.F.&nbsp;13o&nbsp;salário</span>
<div class="a fld" style="left:792px;top:441px;width:126px;height:21px;"></div>
<span id="t109" class="t m" style="font-size:13.75px;line-height:16.5px;top:444.75px;right:32.5px;">0,00</span>
<div class="a cy" style="left:493px;top:463px;width:287.5px;height:20px;"></div>
<span id="t110" class="t m" style="font-size:13.75px;line-height:16.5px;top:465.31px;left:495px;">191&nbsp;-&nbsp;I.R.R.F.&nbsp;Férias</span>
<div class="a fld" style="left:792px;top:462px;width:126px;height:21px;"></div>
<span id="t111" class="t m" style="font-size:13.75px;line-height:16.5px;top:466.15px;right:32.5px;">111,87</span>
<div class="a hd" style="left:493px;top:484px;width:287.5px;height:20.5px;"></div>
<span id="t112" class="t s b" style="font-size:14.6px;line-height:17.52px;top:485.44px;transform:scaleX(0.9533);left:494.5px;">TOTAL&nbsp;DE&nbsp;DESCONTOS</span>
<div class="a hd" style="left:792px;top:484px;width:125.5px;height:20.5px;"></div>
<span id="t113" class="t s b" style="font-size:14.6px;line-height:17.52px;top:485.44px;transform:scaleX(1.1313);left:860.5px;">225,20</span>
<div class="a hd" style="left:493px;top:509px;width:225.5px;height:27.5px;"></div>
<span id="t114" class="t s b" style="font-size:23.8px;line-height:28.56px;top:509.02px;transform:scaleX(1.0236);left:502px;">LÍQUIDO</span>
<div class="a hd" style="left:723px;top:509px;width:194.5px;height:27.5px;"></div>
<span id="t115" class="t s b" style="font-size:23.8px;line-height:28.56px;top:509.02px;transform:scaleX(1.0686);left:810.5px;">5.613,69</span>
<div class="a cy" style="left:493px;top:541px;width:285.5px;height:21px;"></div>
<span id="t116" class="t m" style="font-size:13.75px;line-height:16.5px;top:544.2px;left:494px;">F.G.T.S&nbsp;&nbsp;Quitação</span>
<div class="a fld" style="left:792px;top:541px;width:126px;height:21px;"></div>
<span id="t117" class="t m" style="font-size:13.75px;line-height:16.5px;top:544.2px;right:32.5px;">149,33</span>
<div class="a cy" style="left:493px;top:562px;width:285.5px;height:22px;"></div>
<span id="t118" class="t m" style="font-size:13.75px;line-height:16.5px;top:565.5px;left:494px;">F.G.T.S&nbsp;&nbsp;Mês&nbsp;Anterior</span>
<div class="a fld" style="left:792px;top:562px;width:126px;height:22px;"></div>
<span id="t119" class="t m" style="font-size:13.75px;line-height:16.5px;top:565.5px;right:32.5px;">0,00</span>
<div class="a cy" style="left:493px;top:584px;width:285.5px;height:21px;"></div>
<span id="t120" class="t m" style="font-size:13.75px;line-height:16.5px;top:586.8px;left:494px;">F.G.T.S&nbsp;&nbsp;13o&nbsp;Salário.</span>
<div class="a fld" style="left:792px;top:584px;width:126px;height:21px;"></div>
<span id="t121" class="t m" style="font-size:13.75px;line-height:16.5px;top:586.8px;right:32.5px;">60,00</span>
<div class="a cy" style="left:493px;top:605px;width:285.5px;height:21px;"></div>
<span id="t122" class="t m" style="font-size:13.75px;line-height:16.5px;top:608.1px;left:493px;">Multa</span>
<div class="a fld" style="left:792px;top:605px;width:126px;height:21px;"></div>
<span id="t123" class="t m" style="font-size:13.75px;line-height:16.5px;top:608.1px;right:32.5px;">83,73</span>
<div class="a cy" style="left:493px;top:626px;width:285.5px;height:22px;"></div>
<span id="t124" class="t m" style="font-size:13.75px;line-height:16.5px;top:629.4px;left:494px;">Informe&nbsp;o&nbsp;Saldo&nbsp;do&nbsp;F.G.T.S&nbsp;Dep:</span>
<div class="a btn" style="left:755.5px;top:627px;width:21.5px;height:20px;"></div>
<svg class="a" style="left:757.25px;top:627.7px" width="18" height="18" viewBox="0 0 18 18"><path d="M5.800 .8h6.400l5 5v6.400l-5 5H5.800l-5-5V5.800z" fill="#fff" stroke="#222" stroke-width="1"/><circle cx="9.200" cy="4.700" r="1.700" fill="#0000f0"/><path d="M6.300 7.300h4.300v4.500h1.600v2H5.800v-2h1.900V9H6.300z" fill="#0000f0"/></svg>
<div class="a fld" style="left:792px;top:626px;width:126px;height:22px;"></div>
<span id="t125" class="t m" style="font-size:13.75px;line-height:16.5px;top:629.4px;right:32.5px;">0,00</span>
<div class="a cy" style="left:493px;top:648px;width:285.5px;height:20px;"></div>
<span id="t126" class="t m" style="font-size:13.75px;line-height:16.5px;top:650.7px;left:493px;">Multa&nbsp;Sobre&nbsp;Saldo&nbsp;FGTS</span>
<div class="a fld" style="left:792px;top:648px;width:126px;height:20px;"></div>
<span id="t127" class="t m" style="font-size:13.75px;line-height:16.5px;top:650.7px;right:32.5px;">0,00</span>
<div class="a " style="left:489px;top:679.5px;width:446px;height:43.5px;background:#ffffe1"></div>
<svg class="a" style="left:492.500px;top:686px" width="19" height="19" viewBox="0 0 19 19"><defs><radialGradient id="bg" cx="40%" cy="30%" r="70%"><stop offset="0" stop-color="#7fa6ec"/><stop offset="1" stop-color="#1c46b8"/></radialGradient></defs><circle cx="9.500" cy="9.500" r="9" fill="url(#bg)" stroke="#8a96b0" stroke-width="1"/><circle cx="9.500" cy="5.300" r="1.500" fill="#fff"/><path d="M7.600 8h3.200v6.800H8.400V9.300H7.600z" fill="#fff"/></svg>
<span id="t128" class="t s b" style="font-size:22.8px;line-height:27.36px;top:735.82px;transform:scaleX(1.0049);color:#ff0000;left:501px;">Liberada</span>
<div class="a grp" style="left:626px;top:737px;width:194px;height:32.5px;"></div>
<div class="a " style="left:634px;top:730px;width:70px;height:14px;background:#f0f0f0"></div>
<span id="t129" class="t s" style="font-size:13.7px;line-height:16.44px;top:728.78px;transform:scaleX(1.1067);text-shadow:1px 1px 0 #fff;color:#a0a0a0;left:637px;">Protocolo</span>
<div class="a chk" style="left:642px;top:750px;width:14px;height:13.5px;"></div>
<span id="t130" class="t s" style="font-size:15px;line-height:18px;top:748px;transform:scaleX(0.8317);left:664px;">Gera&nbsp;movimento&nbsp;protocolo</span>
<div class="a btn" style="left:829px;top:728px;width:43.5px;height:38.5px;"></div>
<div class="a btn" style="left:874px;top:728px;width:44px;height:38.5px;"></div>
<svg class="a" style="left:841.500px;top:736.300px" width="18" height="18" viewBox="0 0 18 18"><path d="M9 .3L17.700 9 9 17.700 .3 9z" fill="#00008b"/><g fill="#fff"><ellipse cx="9" cy="4.300" rx="2.300" ry="1.700"/><ellipse cx="9" cy="13.700" rx="2.300" ry="1.700"/><ellipse cx="4.300" cy="9" rx="1.700" ry="2.300"/><ellipse cx="13.700" cy="9" rx="1.700" ry="2.300"/><circle cx="9" cy="9" r="3.300"/></g><circle cx="9" cy="9" r="2.100" fill="#00008b"/></svg>
<svg class="a" style="left:881.500px;top:735.500px" width="30" height="28" viewBox="0 0 30 28"><g fill="none" stroke="#b4b4b4" stroke-width="1.100"><path d="M9.500 2h6l4.300 4.300v6L15.500 16.600h-6L5.200 12.300v-6z"/><path d="M27 7c1.500 6.500-4 13-13 14.200-4 .5-8-.5-9.800-3"/><path d="M10 16.500c3.500-.8 6 .5 5.200 2.500-.8 1.800-4.500 2-7 1"/><path d="M2 17.500l2.300 1 .3 3"/></g><path d="M18.500 13.500l8.500 9" stroke="#a4a4a4" stroke-width="3.600"/><path d="M19.800 12.600l8.300 8.800" stroke="#d4d4d4" stroke-width="1.200"/></svg>
</body></html>
